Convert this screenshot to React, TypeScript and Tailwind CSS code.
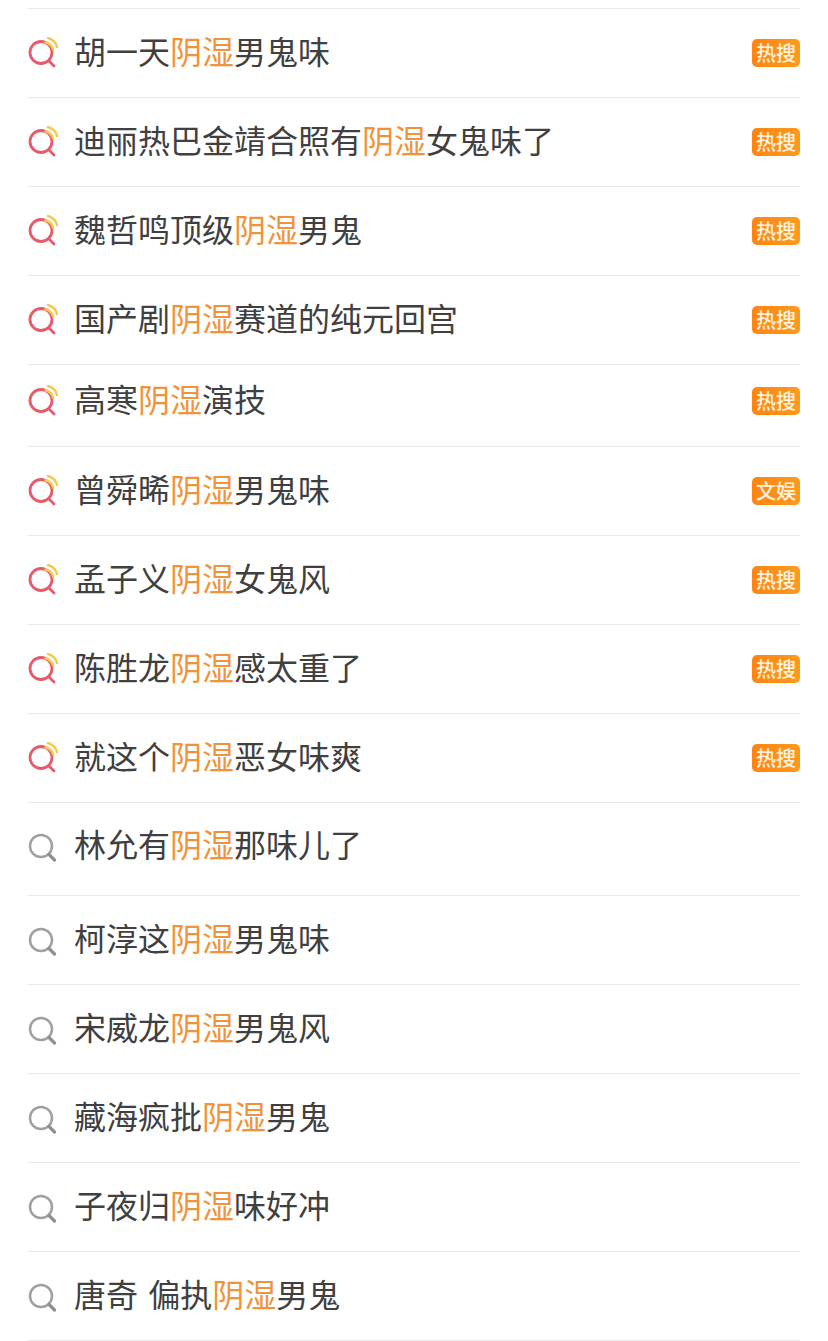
import React from 'react';

type Item = {
  before: string;
  after: string;
  tag?: string;
  rowClass?: string;
};

const items: Item[] = [
  { before: '胡一天', after: '男鬼味', tag: '热搜' },
  { before: '迪丽热巴金靖合照有', after: '女鬼味了', tag: '热搜' },
  { before: '魏哲鸣顶级', after: '男鬼', tag: '热搜' },
  { before: '国产剧', after: '赛道的纯元回宫', tag: '热搜' },
  { before: '高寒', after: '演技', tag: '热搜', rowClass: 'h-[82px] pb-[9px]' },
  { before: '曾舜晞', after: '男鬼味', tag: '文娱' },
  { before: '孟子义', after: '女鬼风', tag: '热搜' },
  { before: '陈胜龙', after: '感太重了', tag: '热搜' },
  { before: '就这个', after: '恶女味爽', tag: '热搜' },
  { before: '林允有', after: '那味儿了', rowClass: 'h-[93px] pb-[6px]' },
  { before: '柯淳这', after: '男鬼味' },
  { before: '宋威龙', after: '男鬼风' },
  { before: '藏海疯批', after: '男鬼' },
  { before: '子夜归', after: '味好冲' },
  { before: '唐奇 偏执', after: '男鬼' },
];

const HotIcon = () => (
  <svg width="32" height="32" viewBox="0 0 32 32" fill="none" className="shrink-0">
    <circle cx="13" cy="15.5" r="11" stroke="#e8596a" strokeWidth="2.8" />
    <path d="M21 24l5 5" stroke="#e8596a" strokeWidth="2.800" strokeLinecap="round" />
    <path d="M17.500 5.500c3.800.8 6.700 3.500 7.700 7.300" stroke="#f5c94e" strokeWidth="2.400" strokeLinecap="round" />
    <path d="M20 1c4.700 1.300 8 4.700 9 9" stroke="#f5c94e" strokeWidth="2.400" strokeLinecap="round" />
  </svg>
);

const PlainIcon = () => (
  <svg width="32" height="32" viewBox="0 0 32 32" fill="none" className="shrink-0">
    <circle cx="13" cy="16" r="11" stroke="#a0a0a0" strokeWidth="2.500" />
    <path d="M21 24.500l5.500 5.500" stroke="#909090" strokeWidth="3.200" strokeLinecap="round" />
  </svg>
);

const Row = ({ item }: { item: Item }) => (
  <div className={`flex items-center border-b border-[#e8e8e8] ${item.rowClass ?? 'h-[89px]'}`}>
    <div className="w-[46px] shrink-0">{item.tag ? <HotIcon /> : <PlainIcon />}</div>
    <div className="flex-1 whitespace-pre pb-[6px] text-[32px] leading-[44px] text-[#404040] [word-spacing:3px]">
      {item.before}
      <span className="text-[#f0933a]">阴湿</span>
      {item.after}
    </div>
    {item.tag && (
      <span className="flex h-[28px] w-[48px] items-center justify-center rounded-[5px] bg-gradient-to-r from-[#ff8412] to-[#ff9a1e] text-[20px] font-medium leading-none text-[#fff6e0]">
        {item.tag}
      </span>
    )}
  </div>
);

export default function App() {
  return (
    <div className="min-h-[1341px] bg-white px-[28px] font-['Noto_Sans_CJK_SC','Noto_Sans',sans-serif]">
      <div className="h-[9px] border-b border-[#e8e8e8]" />
      {items.map((item) => (
        <Row key={item.before} item={item} />
      ))}
    </div>
  );
}
